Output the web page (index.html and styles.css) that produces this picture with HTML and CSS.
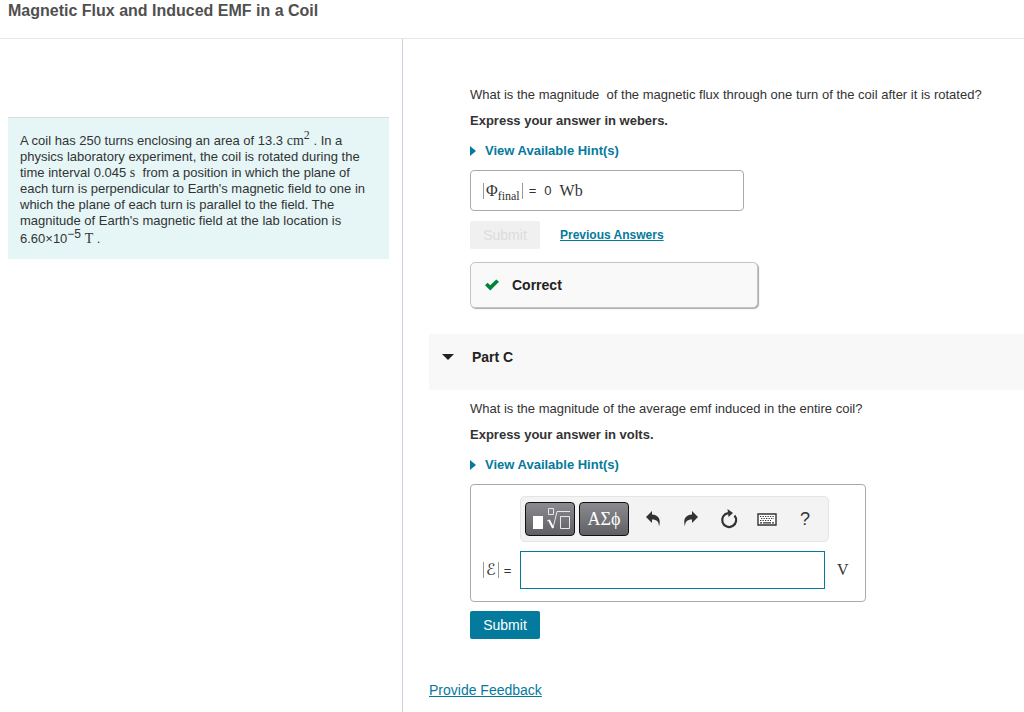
FILE: index.html
```
<!DOCTYPE html>
<html lang="en">
<head>
    <meta charset="UTF-8">
    <meta name="viewport" content="width=device-width, initial-scale=1.0">
    <title>Magnetic Flux and Induced EMF in a Coil</title>
    <link rel="stylesheet" href="styles.css">
</head>
<body>

    <header class="page-header">
        <h1>Magnetic Flux and Induced EMF in a Coil</h1>
    </header>

    <div class="columns">
        <!-- Problem text -->
        <aside class="sidebar">
            <div class="problem">
                A coil has 250 turns enclosing an area of 13.3 <span class="math">cm<sup>2</sup></span> . In a
                physics laboratory experiment, the coil is rotated during the
                time interval 0.045 <span class="math">s</span>&nbsp; from a position in which the plane of
                each turn is perpendicular to Earth's magnetic field to one in
                which the plane of each turn is parallel to the field. The
                magnitude of Earth's magnetic field at the lab location is
                <span class="power">6.60×10<sup>−5</sup> <span class="math">T</span> .</span>
            </div>
        </aside>

        <main class="content">
            <!-- Part B -->
            <section class="part part-b">
                <p class="question">What is the magnitude &nbsp;of the magnetic flux through one turn of the coil after it is rotated?</p>
                <p class="express">Express your answer in webers.</p>
                <a href="#" class="hints">View Available Hint(s)</a>

                <div class="answer-done">
                    <span class="abs math">Φ<sub>final</sub></span>
                    <span>=</span>
                    <span class="value">0</span>
                    <span class="math unit">Wb</span>
                </div>

                <div class="actions">
                    <button class="submit" disabled>Submit</button>
                    <a href="#" class="previous">Previous Answers</a>
                </div>

                <div class="feedback-box">
                    <svg width="14" height="12" viewBox="0 0 14 12">
                        <path d="M0 6.2 2.6 3.7 5.2 6.2 11.3 .4 14 2.7 5.3 11.6Z" fill="#00843b"/>
                    </svg>
                    <span>Correct</span>
                </div>
            </section>

            <div class="part-header">
                <h2><button class="toggle">Part C</button></h2>
            </div>

            <!-- Part C -->
            <section class="part part-c">
                <p class="question">What is the magnitude of the average emf induced in the entire coil?</p>
                <p class="express">Express your answer in volts.</p>
                <a href="#" class="hints">View Available Hint(s)</a>

                <div class="answer-entry">
                    <div class="toolbar">
                        <button class="dark" aria-label="Templates">
                            <svg width="40" height="24" viewBox="0 0 40 24">
                                <path d="M3 9h10v13H3z" fill="#fff"/>
                                <path d="M18.5 1.5h5v6h-5zM17 14l2-1 4 8 4-16.500h13M30.500 9.500h9v12h-9z" fill="none" stroke="#e8e8e8"/>
                                <path d="m19 13 4 8" stroke="#fff" stroke-width="2"/>
                            </svg>
                        </button>
                        <button class="dark symbols">ΑΣϕ</button>
                        <div class="tools">
                            <button class="tool" aria-label="Undo">
                                <svg width="14" height="16" viewBox="0 0 14 16">
                                    <path d="M6 0v3.500c5.500 .3 9.500 4 7 12C13 11 11 8.500 6 8.500V12L0 6Z" fill="#333"/>
                                </svg>
                            </button>
                            <button class="tool" aria-label="Redo">
                                <svg width="14" height="16" viewBox="0 0 14 16">
                                    <path d="M8 0v3.500c-5.500 .3-9.500 4-7 12C1 11 3 8.500 8 8.500V12l6-6Z" fill="#333"/>
                                </svg>
                            </button>
                            <button class="tool" aria-label="Reset">
                                <svg width="18" height="20" viewBox="0 0 18 20">
                                    <path d="M14.500 6.500A7 7 0 1 1 8 4.100" fill="none" stroke="#333" stroke-width="2.200"/>
                                    <path d="M7.500 0 13 4 8.500 8Z" fill="#333"/>
                                </svg>
                            </button>
                            <button class="tool" aria-label="Keyboard">
                                <svg width="20" height="13" viewBox="0 0 20 13">
                                    <path d="M1 1h18v11H1z" fill="#fff" stroke="#333" stroke-width="1.400"/>
                                    <path d="M3 3.500h14M4 5.500h13M3 7.500h11" stroke="#333" stroke-dasharray="1.300 1.200"/>
                                    <path d="M3 9.800h2M6 9.800h8M15 9.800h2" stroke="#333" stroke-width="1.300"/>
                                </svg>
                            </button>
                            <button class="tool help" aria-label="Help">?</button>
                        </div>
                    </div>
                    <label class="entry-label" for="emf"><span class="abs math script">ℰ</span><span>=</span></label>
                    <input class="entry-input" type="text" id="emf">
                    <span class="math entry-unit">V</span>
                </div>

                <button class="submit">Submit</button>
            </section>

            <a href="#" class="provide">Provide Feedback</a>
        </main>
    </div>

</body>
</html>
```
FILE: styles.css
```
* {
    box-sizing: border-box;
}
body {
    font-family: "Liberation Sans", Arial, sans-serif;
    font-size: 13px;
    margin: 0;
    color: #333;
    background-color: #fff;
    min-height: 100vh;
    display: flex;
    flex-direction: column;
}
h1, h2, p {
    margin: 0;
}
a {
    color: #047a9c;
}
button {
    font-family: inherit;
    padding: 0;
    border: none;
    cursor: pointer;
}
.page-header {
    padding: 0 8px 17px;
    border-bottom: 1px solid #e4e6e8;
}
.page-header h1 {
    font-size: 16px;
    line-height: 21px;
    color: #505050;
}
.columns {
    flex: 1;
    display: grid;
    grid-template-columns: 403fr 621fr;
}
.sidebar {
    padding: 78px 13px 0 8px;
    border-right: 1px solid #c8d2dc;
}
.problem {
    padding: 15px 20px 10px 12px;
    line-height: 16px;
    border-top: 1px solid #d5dfe2;
    background-color: #e6f6f7;
}
.math {
    font-family: "Liberation Serif", "Times New Roman", serif;
    font-size: 16px;
    line-height: 16px;
}
.problem .math {
    font-size: 14px;
    line-height: 0;
}
sup, sub {
    font-size: 12px;
    line-height: 0;
}
.power {
    line-height: 20px;
}
.content {
    padding: 47px 0 12px 26px;
}
.part {
    padding: 0 40px 0 41px;
    display: flex;
    flex-direction: column;
    align-items: flex-start;
}
.question {
    line-height: 18px;
    margin-bottom: 8px;
}
.express {
    font-weight: bold;
    line-height: 18px;
    margin-bottom: 12px;
}
.hints {
    display: flex;
    align-items: center;
    font-weight: bold;
    line-height: 18px;
    text-decoration: none;
    margin-bottom: 10px;
}
.hints::before {
    content: "";
    border: 5px solid transparent;
    border-left: 6px solid #047a9c;
    border-right: none;
    margin-right: 9px;
}
.answer-done {
    display: flex;
    align-items: center;
    width: 274px;
    max-width: 100%;
    height: 41px;
    padding-left: 12px;
    border: 1px solid #aaa;
    border-radius: 4px;
    gap: 6px;
}
.abs {
    border: 1px solid #999;
    border-width: 0 1px;
    padding: 0 2px;
}
.value {
    margin: 0 2px;
}
.actions {
    display: flex;
    align-items: center;
    gap: 20px;
    margin: 10px 0 13px;
}
.submit {
    width: 70px;
    height: 28px;
    font-size: 14px;
    color: #fff;
    background-color: #047a9c;
    border-radius: 2px;
}
.submit:disabled {
    color: #dcdcdc;
    background-color: #f0f0f0;
    cursor: default;
}
.previous {
    font-size: 12px;
    font-weight: bold;
}
.feedback-box {
    display: flex;
    align-items: center;
    gap: 13px;
    width: 288px;
    max-width: 100%;
    height: 46px;
    padding-left: 14px;
    font-size: 14px;
    font-weight: bold;
    color: #222;
    border: 1px solid #c4c4c4;
    border-radius: 5px;
    background-color: #f9f9f9;
    box-shadow: 1px 1px 1px #aaa;
}
.part-header {
    height: 56px;
    margin: 26px 0 10px;
    padding: 13px 13px 0;
    background-color: #f8f8f8;
}
.part-header h2 {
    display: flex;
}
.toggle {
    display: flex;
    align-items: center;
    height: 20px;
    font-size: 14px;
    font-weight: bold;
    color: #222;
    background: none;
}
.toggle::before {
    content: "";
    border: 6px solid transparent;
    border-top-color: #222;
    border-bottom: none;
    margin-right: 18px;
}
.answer-entry {
    display: grid;
    grid-template-columns: 37px 305px auto;
    align-items: center;
    row-gap: 9px;
    padding: 11px 16px 12px 12px;
    margin-bottom: 9px;
    border: 1px solid #aaa;
    border-radius: 4px;
}
.toolbar {
    grid-column: 2 / 4;
    justify-self: start;
    display: flex;
    align-items: center;
    gap: 4px;
    height: 46px;
    padding: 0 4px;
    border: 1px solid #e4e4e4;
    border-radius: 5px;
    background-color: #f3f3f3;
}
.tools {
    display: flex;
    margin-left: 1px;
}
.dark {
    display: flex;
    align-items: center;
    justify-content: center;
    width: 50px;
    height: 34px;
    border: 1px solid #111;
    border-radius: 4px;
    color: #fff;
    background-image: linear-gradient(#8a8a90, #606064);
}
.symbols {
    font-family: "Liberation Serif", serif;
    font-size: 18px;
}
.tool {
    display: flex;
    align-items: center;
    justify-content: center;
    width: 38px;
    height: 34px;
    color: #333;
    background: none;
}
.help {
    font-size: 18px;
}
.script {
    font-family: "DejaVu Serif", "DejaVu Sans", serif;
}
.entry-label {
    display: flex;
    align-items: center;
    gap: 5px;
}
.entry-input {
    width: 100%;
    height: 38px;
    padding: 0 8px;
    font-size: 16px;
    border: 1px solid #047a9c;
    outline: none;
}
.entry-unit {
    margin: 0 0 0 12px;
}
.provide {
    display: inline-block;
    margin-top: 42px;
    font-size: 14px;
    line-height: 18px;
}
```
